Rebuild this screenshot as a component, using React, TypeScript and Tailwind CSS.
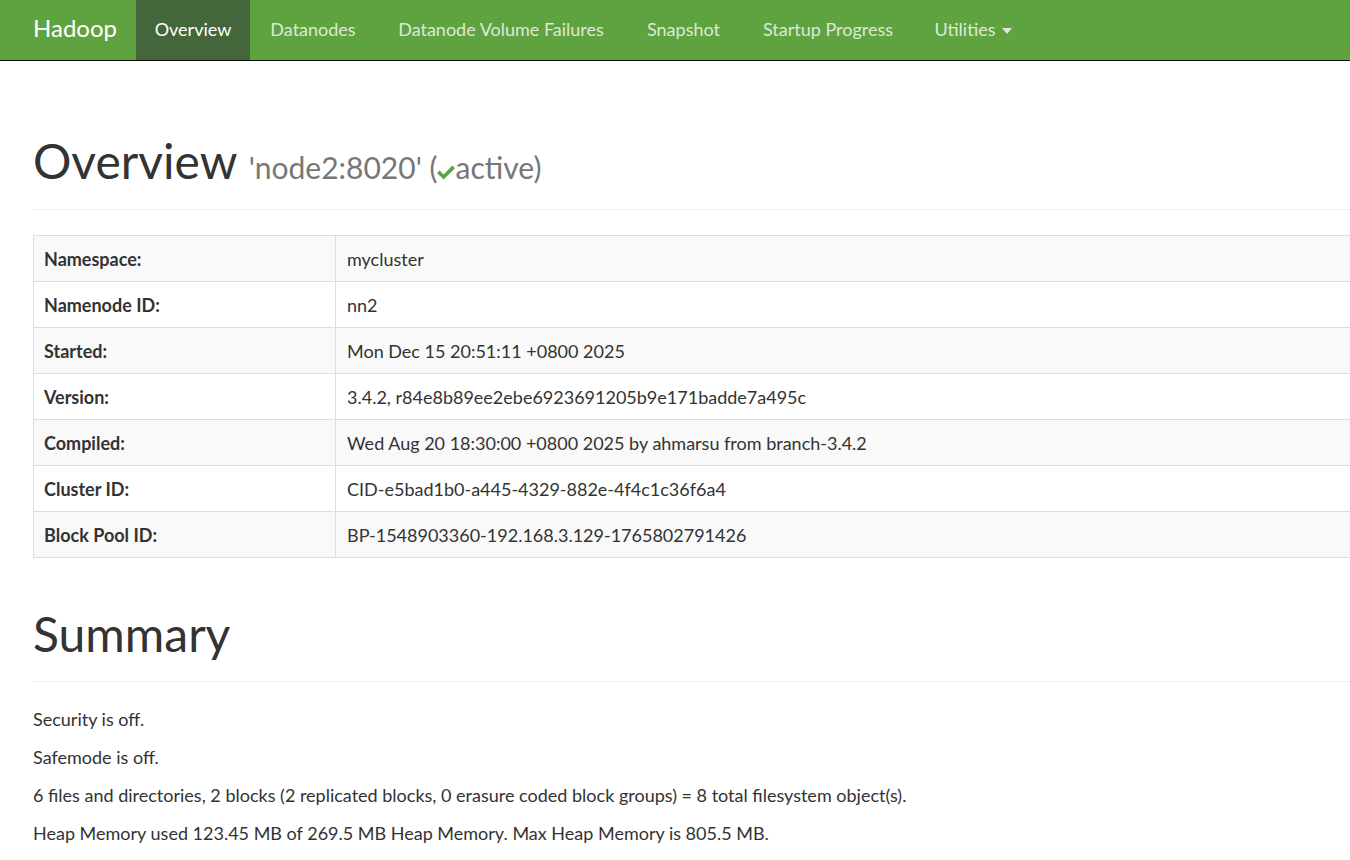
import React from "react";

const rows: [string, string][] = [
  ["Namespace:", "mycluster"],
  ["Namenode ID:", "nn2"],
  ["Started:", "Mon Dec 15 20:51:11 +0800 2025"],
  ["Version:", "3.4.2, r84e8b89ee2ebe6923691205b9e171badde7a495c"],
  ["Compiled:", "Wed Aug 20 18:30:00 +0800 2025 by ahmarsu from branch-3.4.2"],
  ["Cluster ID:", "CID-e5bad1b0-a445-4329-882e-4f4c1c36f6a4"],
  ["Block Pool ID:", "BP-1548903360-192.168.3.129-1765802791426"],
];

export default function App() {
  return (
    <div className="min-h-screen w-full overflow-hidden bg-white font-[Lato,sans-serif] text-[#333]">
      <nav className="flex h-[61px] border-b border-[#080808] bg-[#5fa341]">
        <a className="block w-[136px] shrink-0 pl-[33px] pt-[14px] text-[24px] leading-[28px] text-white">Hadoop</a>
        <a className="block w-[114px] shrink-0 bg-[#43673a] pt-[15px] text-center text-[18px] leading-[28px] text-white">Overview</a>
        <a className="block w-[126px] shrink-0 pt-[15px] text-center text-[18px] leading-[28px] text-[#dde9d6]">Datanodes</a>
        <a className="block w-[250px] shrink-0 pt-[15px] text-center text-[18px] leading-[28px] text-[#dde9d6]">Datanode Volume Failures</a>
        <a className="block w-[115px] shrink-0 pt-[15px] text-center text-[18px] leading-[28px] text-[#dde9d6]">Snapshot</a>
        <a className="block w-[174px] shrink-0 pt-[15px] text-center text-[18px] leading-[28px] text-[#dde9d6]">Startup Progress</a>
        <a className="flex w-[116px] shrink-0 justify-center gap-[6px] pt-[15px] text-[18px] leading-[28px] text-[#dde9d6]">
          <span>Utilities</span>
          <span className="mt-[13px] h-0 w-0 border-x-[5.5px] border-t-[6px] border-x-transparent border-t-[#dde9d6]"></span>
        </a>
      </nav>

      <div className="w-[1400px] pl-[33px]">
        <div className="mt-[72px] mb-[25px] border-b border-[#eee] pb-[21px]">
          <h1 className="h-[55px] whitespace-nowrap text-[48px] leading-[55px] font-normal">
            Overview{" "}
            <span className="text-[30px] leading-[30px] text-[#777]">
              'node2:8020' (
              <svg width="18" height="15" viewBox="0 0 18 15" className="inline-block align-[-1px]">
                <path d="M0 8 L2.6 5.4 L6.6 9.4 L15.4 0.6 L18 3.2 L6.6 14.6 Z" fill="#5fa341" />
              </svg>
              active)
            </span>
          </h1>
        </div>

        <div className="border-l border-t border-[#ddd]">
          {rows.map(([k, v], i) => (
            <div
              key={k}
              className={`flex h-[46px] border-b border-[#ddd] ${i % 2 === 0 ? "bg-[#f9f9f9]" : "bg-white"}`}
            >
              <div className="flex w-[302px] shrink-0 items-center border-r border-[#ddd] pl-[10px] text-[18px] leading-[28px] font-bold">
                {k}
              </div>
              <div className="flex items-center pl-[11px] text-[18px] leading-[28px]">{v}</div>
            </div>
          ))}
        </div>

        <div className="mt-[48px] mb-[23px] border-b border-[#eee] pb-[20px]">
          <h1 className="h-[55px] text-[48px] leading-[55px] font-normal">Summary</h1>
        </div>

        <p className="mb-[10px] text-[18px] leading-[28px]">Security is off.</p>
        <p className="mb-[10px] text-[18px] leading-[28px]">Safemode is off.</p>
        <p className="mb-[10px] text-[18px] leading-[28px]">
          6 files and directories, 2 blocks (2 replicated blocks, 0 erasure coded block groups) = 8 total filesystem object(s).
        </p>
        <p className="mb-[10px] text-[18px] leading-[28px]">
          Heap Memory used 123.45 MB of 269.5 MB Heap Memory. Max Heap Memory is 805.5 MB.
        </p>
      </div>
    </div>
  );
}
